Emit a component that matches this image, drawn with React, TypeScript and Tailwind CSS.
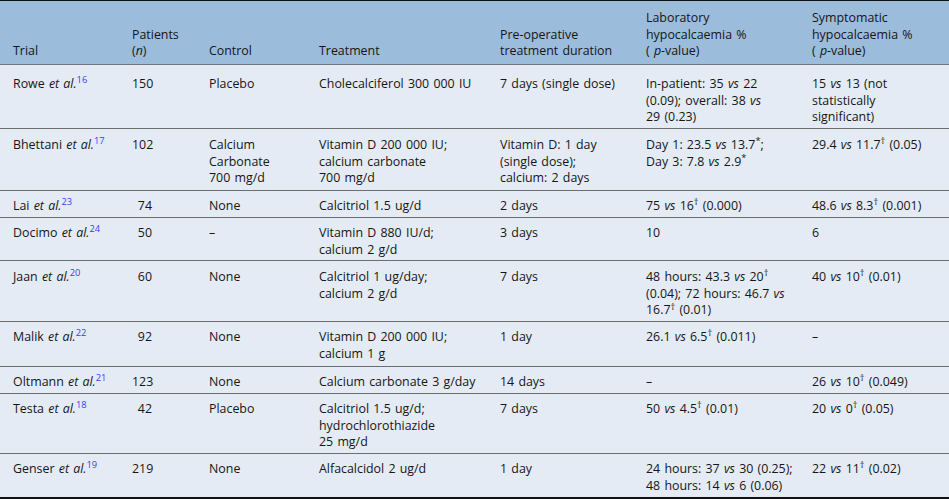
import React from "react"

type Cell = React.ReactNode[]

const Ref = ({ n }: { n: number }) => <sup className="text-[#3a3aff]">{n}</sup>
const Dag = () => <sup>†</sup>
const Star = () => <sup>*</sup>
const Vs = () => <i>vs</i>
const Et = () => <i>et al.</i>

const widths = ["w-[119px]", "w-[77px]", "w-[110px]", "w-[181px]", "w-[146px]", "w-[166px]", "w-[150px]"]

const header: Cell[] = [
  ["Trial"],
  ["Patients", <>(<i>n</i>)</>],
  ["Control"],
  ["Treatment"],
  ["Pre-operative", "treatment duration"],
  ["Laboratory", "hypocalcaemia %", <>( <i>p</i>-value)</>],
  ["Symptomatic", "hypocalcaemia %", <>( <i>p</i>-value)</>],
]

// row heights incl. bottom rule + top padding, taken from the printed table
const rowH = ["h-[64px]", "h-[62px]", "h-[27px]", "h-[43px]", "h-[61px]", "h-[45px]", "h-[27px]", "h-[60px]", "h-[45px]"]
const rowPt = ["pt-[11px]", "pt-[8px]", "pt-[7px]", "pt-[7px]", "pt-[8px]", "pt-[7px]", "pt-[7px]", "pt-[7px]", "pt-[7px]"]

const rows: Cell[][] = [
  [
    [<>Rowe <Et /><Ref n={16} /></>],
    ["150"],
    ["Placebo"],
    ["Cholecalciferol 300 000 IU"],
    ["7 days (single dose)"],
    [<>In-patient: 35 <Vs /> 22</>, <>(0.09); overall: 38 <Vs /></>, "29 (0.23)"],
    [<>15 <Vs /> 13 (not</>, "statistically", "significant)"],
  ],
  [
    [<>Bhettani <Et /><Ref n={17} /></>],
    ["102"],
    ["Calcium", "Carbonate", "700 mg/d"],
    ["Vitamin D 200 000 IU;", "calcium carbonate", "700 mg/d"],
    ["Vitamin D: 1 day", "(single dose);", "calcium: 2 days"],
    [<>Day 1: 23.5 <Vs /> 13.7<Star />;</>, <>Day 3: 7.8 <Vs /> 2.9<Star /></>],
    [<>29.4 <Vs /> 11.7<Dag /> (0.05)</>],
  ],
  [
    [<>Lai <Et /><Ref n={23} /></>],
    ["74"],
    ["None"],
    ["Calcitriol 1.5 ug/d"],
    ["2 days"],
    [<>75 <Vs /> 16<Dag /> (0.000)</>],
    [<>48.6 <Vs /> 8.3<Dag /> (0.001)</>],
  ],
  [
    [<>Docimo <Et /><Ref n={24} /></>],
    ["50"],
    ["–"],
    ["Vitamin D 880 IU/d;", "calcium 2 g/d"],
    ["3 days"],
    ["10"],
    ["6"],
  ],
  [
    [<>Jaan <Et /><Ref n={20} /></>],
    ["60"],
    ["None"],
    ["Calcitriol 1 ug/day;", "calcium 2 g/d"],
    ["7 days"],
    [<>48 hours: 43.3 <Vs /> 20<Dag /></>, <>(0.04); 72 hours: 46.7 <Vs /></>, <>16.7<Dag /> (0.01)</>],
    [<>40 <Vs /> 10<Dag /> (0.01)</>],
  ],
  [
    [<>Malik <Et /><Ref n={22} /></>],
    ["92"],
    ["None"],
    ["Vitamin D 200 000 IU;", "calcium 1 g"],
    ["1 day"],
    [<>26.1 <Vs /> 6.5<Dag /> (0.011)</>],
    ["–"],
  ],
  [
    [<>Oltmann <Et /><Ref n={21} /></>],
    ["123"],
    ["None"],
    ["Calcium carbonate 3 g/day"],
    ["14 days"],
    ["–"],
    [<>26 <Vs /> 10<Dag /> (0.049)</>],
  ],
  [
    [<>Testa <Et /><Ref n={18} /></>],
    ["42"],
    ["Placebo"],
    ["Calcitriol 1.5 ug/d;", "hydrochlorothiazide", "25 mg/d"],
    ["7 days"],
    [<>50 <Vs /> 4.5<Dag /> (0.01)</>],
    [<>20 <Vs /> 0<Dag /> (0.05)</>],
  ],
  [
    [<>Genser <Et /><Ref n={19} /></>],
    ["219"],
    ["None"],
    ["Alfacalcidol 2 ug/d"],
    ["1 day"],
    [<>24 hours: 37 <Vs /> 30 (0.25);</>, <>48 hours: 14 <Vs /> 6 (0.06)</>],
    [<>22 <Vs /> 11<Dag /> (0.02)</>],
  ],
]

function Lines({ lines, right }: { lines: Cell; right?: boolean }) {
  return (
    <div className={right ? "w-[20px] text-right" : ""}>
      {lines.map((l, i) => (
        <div key={i} className="whitespace-nowrap h-[16.7px]">
          {l}
        </div>
      ))}
    </div>
  )
}

export default function App() {
  return (
    <div className="w-[949px] h-[499px] overflow-hidden bg-[#e4ebf4] font-['Open_Sans','Noto_Sans',sans-serif] text-[12.4px] leading-[16.7px] text-[#161616] [word-spacing:1px]">
      <div className="flex h-[65px] items-end bg-[#9bbcdb] border-t border-t-[#111] border-b border-b-[#6e7680] pb-[4px]">
        {header.map((c, i) => (
          <div key={i} className={`${widths[i]} shrink-0 pl-[13px]`}>
            <Lines lines={c} />
          </div>
        ))}
      </div>
      {rows.map((r, ri) => (
        <div
          key={ri}
          className={`flex items-start ${rowH[ri]} ${rowPt[ri]} ${
            ri === rows.length - 1 ? "border-b-2 border-b-[#111]" : "border-b border-b-[#6e6e6e]"
          }`}
        >
          {r.map((c, ci) => (
            <div key={ci} className={`${widths[ci]} shrink-0 pl-[13px]`}>
              <Lines lines={c} right={ci === 1} />
            </div>
          ))}
        </div>
      ))}
    </div>
  )
}
